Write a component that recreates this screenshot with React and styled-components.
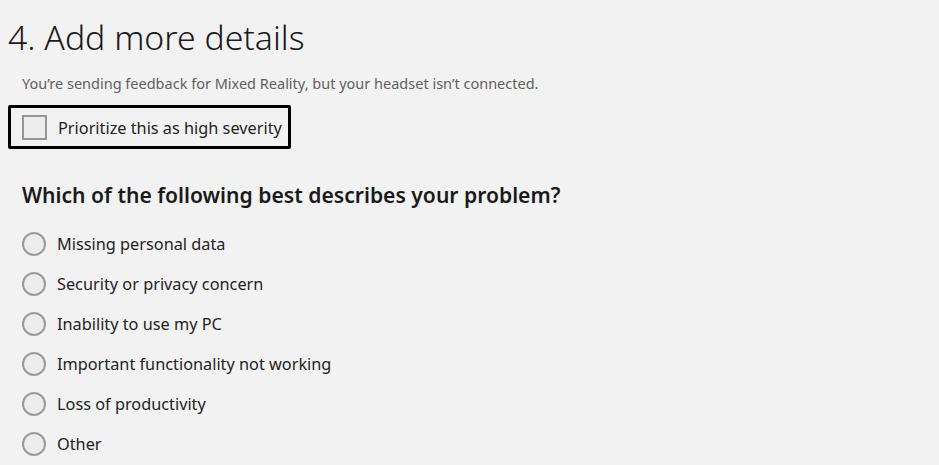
import styled, { createGlobalStyle } from "styled-components"

const GlobalStyle = createGlobalStyle`
  html, body {
    margin: 0;
    padding: 0;
    background: #f2f2f2;
  }
  body {
    font-family: "Noto Sans", "Open Sans", sans-serif;
    color: #1f1f1f;
  }
`

const options = [
  "Missing personal data",
  "Security or privacy concern",
  "Inability to use my PC",
  "Important functionality not working",
  "Loss of productivity",
  "Other",
]

const App = () => {
  return (
    <>
      <GlobalStyle />
      <PageSt>
        <TitleSt>4. Add more details</TitleSt>
        <NoteSt>You’re sending feedback for Mixed Reality, but your headset isn’t connected.</NoteSt>
        <FocusBoxSt>
          <CheckSt />
          <LabelSt>Prioritize this as high severity</LabelSt>
        </FocusBoxSt>
        <QuestionSt>Which of the following best describes your problem?</QuestionSt>
        <RadioListSt>
          {options.map(text => (
            <RadioRowSt key={text}>
              <RadioSt />
              <LabelSt>{text}</LabelSt>
            </RadioRowSt>
          ))}
        </RadioListSt>
      </PageSt>
    </>
  )
}

const PageSt = styled.div`
  width: 939px;
  height: 465px;
  overflow: hidden;
  padding: 13px 0 0 8px;
  box-sizing: border-box;
`
const TitleSt = styled.h1`
  margin: 0;
  font-size: 33.8px;
  font-weight: 300;
  line-height: 48px;
  color: #1a1a1a;
`
const NoteSt = styled.p`
  margin: 12px 0 0 14px;
  font-size: 14.5px;
  line-height: 20px;
  color: #5f5f5f;
`
const FocusBoxSt = styled.div`
  display: inline-flex;
  align-items: center;
  gap: 11px;
  margin-top: 12px;
  padding: 7px 6px 6px 11px;
  border: 3px solid #000;
  border-radius: 2px;
`
const CheckSt = styled.span`
  width: 21px;
  height: 21px;
  border: 2px solid #959595;
  background: #ececec;
  flex-shrink: 0;
`
const LabelSt = styled.span`
  font-size: 16.3px;
  line-height: 24px;
  color: #222;
`
const QuestionSt = styled.h2`
  margin: 31px 0 0 14px;
  font-size: 21.1px;
  font-weight: 600;
  line-height: 30px;
  color: #1a1a1a;
`
const RadioListSt = styled.div`
  display: flex;
  flex-direction: column;
  gap: 16px;
  margin: 22px 0 0 14px;
`
const RadioRowSt = styled.div`
  display: flex;
  align-items: center;
  gap: 11px;
  height: 24px;
`
const RadioSt = styled.span`
  width: 20px;
  height: 20px;
  border: 2px solid #9a9a9a;
  border-radius: 50%;
  background: #ececec;
  flex-shrink: 0;
`

export default App
